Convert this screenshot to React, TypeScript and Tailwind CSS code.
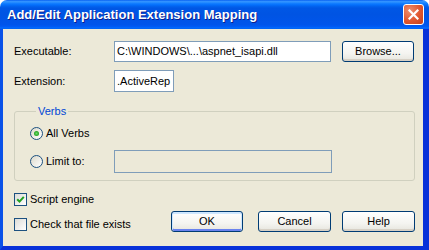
import React from 'react';

function Radio({ checked }: { checked?: boolean }) {
  return (
    <span className="flex h-[13px] w-[13px] shrink-0 items-center justify-center rounded-full border border-[#1C5180] bg-[linear-gradient(135deg,#DCD9CA,#FFFFFF)]">
      {checked && (
        <span className="h-[5px] w-[5px] rounded-full bg-[radial-gradient(circle,#6BDB67_0%,#21A121_70%,#1A8A1A_100%)]" />
      )}
    </span>
  );
}

function Checkbox({ checked }: { checked?: boolean }) {
  return (
    <span className="flex h-[13px] w-[13px] shrink-0 items-center justify-center border border-[#1C5180] bg-[linear-gradient(135deg,#DCDCD7,#FFFFFF)]">
      {checked && (
        <svg width="9" height="9" viewBox="0 0 9 9">
          <path d="M1.2 4.2 L3.5 6.6 L7.8 1.8" stroke="#21A121" strokeWidth="2" fill="none" />
        </svg>
      )}
    </span>
  );
}

function Button({ label, primary, className = '' }: { label: string; primary?: boolean; className?: string }) {
  return (
    <button
      className={`flex h-[21px] items-center justify-center rounded-[3px] border border-[#003C74] bg-[linear-gradient(to_bottom,#FFFFFF,#F4F4F0_60%,#E6E5DD)] text-[11px] text-black ${
        primary
          ? 'shadow-[inset_0_1px_0_1px_#CEE7FF,inset_0_-1px_0_1px_#6982EE]'
          : 'shadow-[inset_0_-2px_0_0_#D6D0C5]'
      } ${className}`}
    >
      {label}
    </button>
  );
}

export default function App() {
  return (
    <div className="flex h-[250px] w-[429px] flex-col font-['Liberation_Sans',Arial,sans-serif] text-[11px] text-black">
      {/* title bar */}
      <div className="flex h-[29px] shrink-0 items-center rounded-t-[7px] bg-[linear-gradient(to_bottom,#0058EE_0%,#3593FF_4%,#288EFF_8%,#127DFF_12%,#036FFC_17%,#0262EE_22%,#0057E5_28%,#0054E3_50%,#0055EB_85%,#005BF5_92%,#026AFE_96%,#0062EF_100%)] pl-[7px] pr-[5px]">
        <span className="text-[13px] font-bold text-white [text-shadow:1px_1px_0_#0F1E8A]">
          Add/Edit Application Extension Mapping
        </span>
        <span className="ml-auto flex h-[21px] w-[21px] items-center justify-center rounded-[3px] border border-white bg-[radial-gradient(circle_at_30%_30%,#EE8E6E_0%,#E0562F_55%,#C4401A_100%)]">
          <svg width="11" height="11" viewBox="0 0 11 11">
            <path d="M1.5 1.5 L9.5 9.5 M9.5 1.5 L1.5 9.5" stroke="white" strokeWidth="2.2" strokeLinecap="square" />
          </svg>
        </span>
      </div>

      {/* frame + body */}
      <div className="flex flex-1 border-b-[4px] border-l-[3px] border-r-[6px] border-b-[#0831D9] border-l-[#0A52E8] border-r-[#0831D9]">
        <div className="flex flex-1 flex-col bg-[#ECE9D8] pl-[11px] pt-[12px]">
          <div className="flex items-center">
            <span className="w-[100px]">Executable:</span>
            <div className="flex h-[21px] w-[217px] items-center border border-[#7F9DB9] bg-white px-[2px]">
              C:\WINDOWS\...\aspnet_isapi.dll
            </div>
            <Button className="ml-[11px] h-[20px] w-[72px]" label="Browse..." />
          </div>

          <div className="mt-[8px] flex items-center">
            <span className="w-[100px]">Extension:</span>
            <div className="flex h-[22px] w-[60px] items-center border border-[#7F9DB9] bg-white px-[2px]">
              .ActiveRep
            </div>
          </div>

          <fieldset className="mt-[13px] w-[401px] rounded-[3px] border border-[#D0D0BF] pb-[7px] pl-[15px]">
            <legend className="ml-[6px] px-[2px] leading-[13px] text-[#0046D5]">Verbs</legend>
            <div className="mt-[9px] flex h-[13px] items-center">
              <Radio checked />
              <span className="ml-[3px]">All Verbs</span>
            </div>
            <div className="mt-[10px] flex items-center">
              <div className="flex w-[84px] items-center">
                <Radio />
                <span className="ml-[3px]">Limit to:</span>
              </div>
              <div className="h-[23px] w-[218px] border border-[#7F9DB9] bg-[#ECE9D8]" />
            </div>
          </fieldset>

          <div className="mt-[12px] flex items-start">
            <div className="flex w-[157px] flex-col gap-[12px]">
              <div className="flex h-[13px] items-center">
                <Checkbox checked />
                <span className="ml-[3px]">Script engine</span>
              </div>
              <div className="flex h-[13px] items-center">
                <Checkbox />
                <span className="ml-[3px]">Check that file exists</span>
              </div>
            </div>
            <div className="mt-[18px] flex">
              <Button primary className="w-[72px]" label="OK" />
              <Button className="ml-[15px] w-[73px]" label="Cancel" />
              <Button className="ml-[11px] w-[73px]" label="Help" />
            </div>
          </div>
        </div>
      </div>
    </div>
  );
}
